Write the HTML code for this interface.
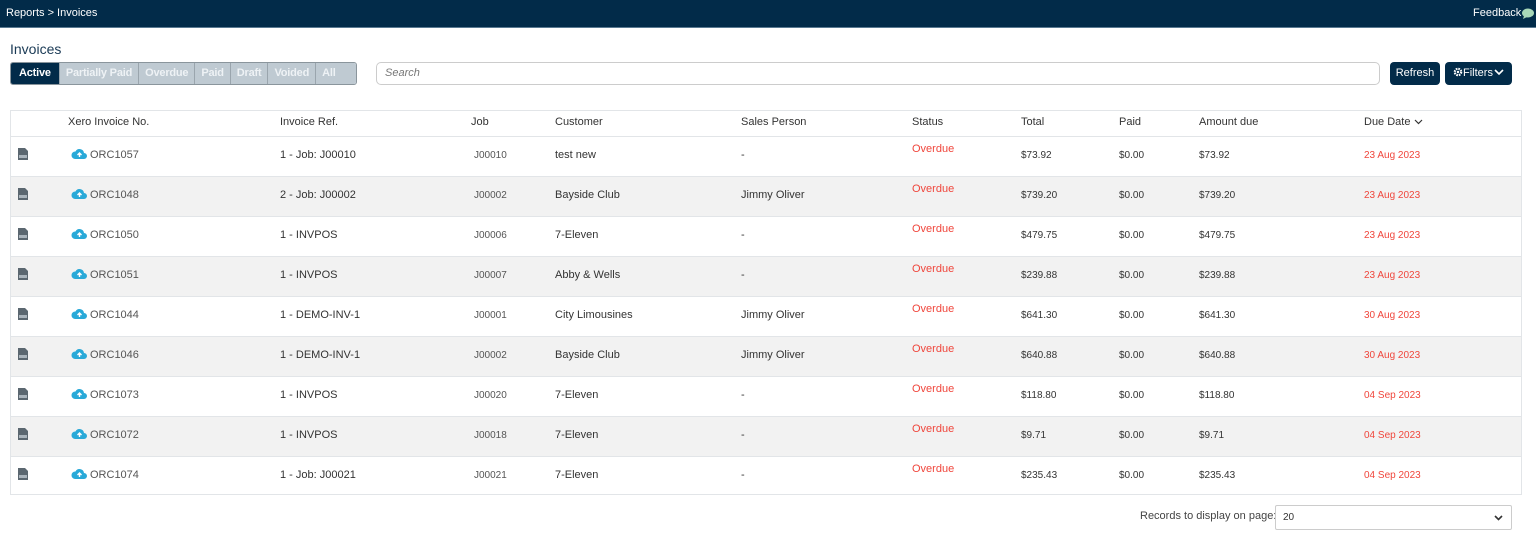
<!DOCTYPE html>
<html><head><meta charset="utf-8"><style>
*{box-sizing:border-box;margin:0;padding:0}
body{width:1536px;height:539px;background:#fff;font-family:"Liberation Sans",sans-serif;color:#333;position:relative;overflow:hidden;font-size:11px}
.nav{position:absolute;left:0;top:0;width:1536px;height:28px;background:#022b49;border-bottom:1px solid #5a7a92;color:#fff;font-size:11px}
.a{position:absolute;white-space:nowrap}
.tabs{position:absolute;left:10px;top:62px;height:23px;width:347px;display:flex;border:1px solid #8a959c;border-radius:3px;overflow:hidden}
.tabs div{background:#bfcad2;color:#eef2f5;font-size:11px;font-weight:bold;padding:0 6px;line-height:21px;border-left:1px solid #9aa5ad;letter-spacing:-0.2px}
.tabs div.on{background:#022b49;color:#fff;border-left:none;padding:0 8px}
.search{position:absolute;left:376px;top:62px;width:1004px;height:23px;border:1px solid #ccc;border-radius:5px;font-style:italic;color:#777;padding:4px 8px;font-size:11px}
.btn{position:absolute;top:62px;height:23px;background:#022b49;color:#fff;border-radius:4px;font-size:11px;line-height:22px;text-align:center}
.tbl{position:absolute;left:10px;top:110px;width:1512px;height:385px;border:1px solid #e2e5e8}
.row{position:absolute;left:0;width:1510px;height:40px;border-top:1px solid #e2e5e8}
.g{background:#f2f2f2}
.c{position:absolute;white-space:nowrap;font-size:11px;color:#333}
.sm{font-size:10px}
.red{color:#f0463c}
.hd{position:absolute;font-size:11px;color:#333;top:5px;white-space:nowrap}
</style></head><body>
<div class="nav"><span class="a" style="left:6px;top:7px">Reports &gt; Invoices</span>
<span class="a" style="left:1473px;top:7px">Feedback</span>
<svg class="a" style="left:1522px;top:8px" width="12" height="11" viewBox="0 0 12 11"><ellipse cx="6" cy="5" rx="6" ry="4.5" fill="#a8d8b8"/><path d="M2 8 L1 11 L5 9z" fill="#a8d8b8"/></svg></div>
<div class="a" style="left:10px;top:41px;font-size:14px;color:#1a3a55">Invoices</div>
<div class="tabs"><div class="on">Active</div><div>Partially Paid</div><div>Overdue</div><div>Paid</div><div>Draft</div><div>Voided</div><div style="flex:1">All</div></div>
<div class="search">Search</div>
<div class="btn" style="left:1390px;width:50px">Refresh</div>
<div class="btn" style="left:1445px;width:67px"><svg width="10" height="10" viewBox="0 0 10 10" style="vertical-align:-1px"><circle cx="5" cy="5" r="3.2" fill="none" stroke="#fff" stroke-width="2.2" stroke-dasharray="1.6 0.9"/><circle cx="5" cy="5" r="1.2" fill="#fff"/></svg>Filters<svg width="10" height="7" viewBox="0 0 10 7" style="margin-left:1px"><path d="M1 1L5 5L9 1" stroke="#fff" stroke-width="1.6" fill="none"/></svg></div>
<div class="tbl">
<div class="hd" style="left:57px">Xero Invoice No.</div>
<div class="hd" style="left:269px">Invoice Ref.</div>
<div class="hd" style="left:460px">Job</div>
<div class="hd" style="left:544px">Customer</div>
<div class="hd" style="left:730px">Sales Person</div>
<div class="hd" style="left:901px">Status</div>
<div class="hd" style="left:1010px">Total</div>
<div class="hd" style="left:1108px">Paid</div>
<div class="hd" style="left:1188px">Amount due</div>
<div class="hd" style="left:1353px">Due Date <svg width="9" height="6" viewBox="0 0 9 6"><path d="M1 1L4.5 4.5L8 1" stroke="#333" stroke-width="1.2" fill="none"/></svg></div>
<div id="rows"></div>
</div>
<div class="a" style="left:1140px;top:510px;font-size:11px;color:#444">Records to display on page:</div>
<div class="a" style="left:1275px;top:505px;width:237px;height:25px;border:1px solid #ccc;border-radius:2px;font-size:10px;padding:6px 7px">20<svg style="position:absolute;right:8px;top:9px" width="9" height="6" viewBox="0 0 9 6"><path d="M1 1L4.5 4.5L8 1" stroke="#333" stroke-width="1.6" fill="none"/></svg></div>
<script>
var d=[["ORC1057","1 - Job: J00010","J00010","test new","-","$73.92","23 Aug 2023"],
["ORC1048","2 - Job: J00002","J00002","Bayside Club","Jimmy Oliver","$739.20","23 Aug 2023"],
["ORC1050","1 - INVPOS","J00006","7-Eleven","-","$479.75","23 Aug 2023"],
["ORC1051","1 - INVPOS","J00007","Abby &amp; Wells","-","$239.88","23 Aug 2023"],
["ORC1044","1 - DEMO-INV-1","J00001","City Limousines","Jimmy Oliver","$641.30","30 Aug 2023"],
["ORC1046","1 - DEMO-INV-1","J00002","Bayside Club","Jimmy Oliver","$640.88","30 Aug 2023"],
["ORC1073","1 - INVPOS","J00020","7-Eleven","-","$118.80","04 Sep 2023"],
["ORC1072","1 - INVPOS","J00018","7-Eleven","-","$9.71","04 Sep 2023"],
["ORC1074","1 - Job: J00021","J00021","7-Eleven","-","$235.43","04 Sep 2023"]];
var h="";
d.forEach(function(r,i){
h+='<div class="row'+(i%2?' g':'')+'" style="top:'+(25+40*i)+'px">'+
'<svg class="c" style="left:7px;top:11px" width="10" height="12" viewBox="0 0 10 12"><path d="M0 0H7L10 3V12H0Z" fill="#5b6770"/><rect x="1" y="7" width="8" height="3" fill="#aab4bc"/></svg>'+
'<svg class="c" style="left:60px;top:10px" width="16" height="12" viewBox="0 0 16 12"><path d="M4 12H13A3 3 0 0 0 13 6A4.5 4.5 0 0 0 4.5 4.5A3.7 3.7 0 0 0 4 12Z" fill="#29a9d8"/><path d="M8.5 10V6M6.5 8L8.5 6L10.5 8" stroke="#fff" stroke-width="1.4" fill="none"/></svg>'+
'<div class="c" style="left:79px;top:12px;color:#555">'+r[0]+'</div>'+
'<div class="c" style="left:269px;top:12px">'+r[1]+'</div>'+
'<div class="c sm" style="left:463px;top:13px;color:#555">'+r[2]+'</div>'+
'<div class="c" style="left:544px;top:12px">'+r[3]+'</div>'+
'<div class="c" style="left:730px;top:12px">'+r[4]+'</div>'+
'<div class="c red" style="left:901px;top:6px">Overdue</div>'+
'<div class="c sm" style="left:1010px;top:13px">'+r[5]+'</div>'+
'<div class="c sm" style="left:1108px;top:13px">$0.00</div>'+
'<div class="c sm" style="left:1188px;top:13px">'+r[5]+'</div>'+
'<div class="c sm red" style="left:1353px;top:13px">'+r[6]+'</div></div>';});
document.getElementById("rows").innerHTML=h;
</script>
</body></html>
